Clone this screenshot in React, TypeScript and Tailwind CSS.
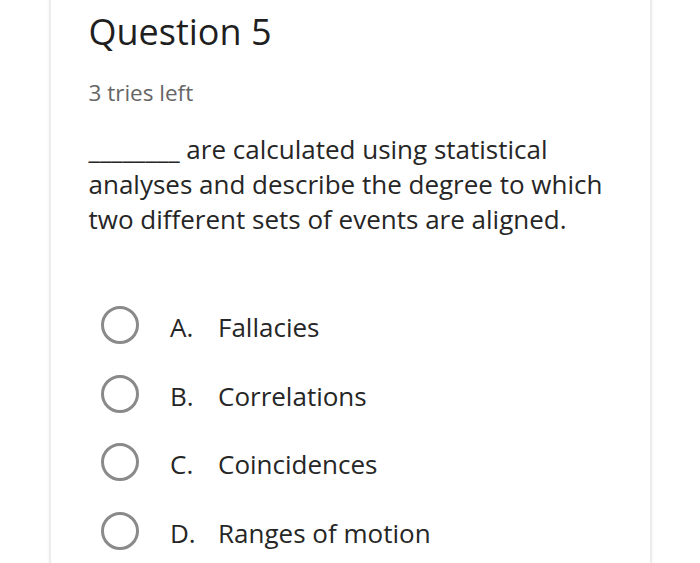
export default function App() {
  const options = [
    ["A.", "Fallacies"],
    ["B.", "Correlations"],
    ["C.", "Coincidences"],
    ["D.", "Ranges of motion"],
  ];
  return (
    <div
      className="w-[700px] h-[563px] bg-white overflow-hidden flex justify-center"
      style={{ fontFamily: '"Open Sans", sans-serif' }}
    >
      <div className="w-[603px] h-full border-x-2 border-[#ececec] shadow-[0_0_3px_rgba(0,0,0,0.06)] pl-[38px] pr-[30px] flex flex-col">
        <div className="mt-[8px] text-[36px] leading-[48px] text-[#1f1f1f]">Question 5</div>
        <div className="mt-[22px] text-[22.5px] leading-[30px] text-[#666666]">3 tries left</div>
        <p className="mt-[24px] text-[26px] leading-[35px] text-[#262626]">
          ________ are calculated using statistical analyses and describe the degree to which two different sets of events are aligned.
        </p>
        <div className="mt-[56px] flex flex-col">
          {options.map(([l, t]) => (
            <div key={l} className="h-[68.5px] flex items-center text-[26px] leading-[36px] text-[#262626]">
              <div className="ml-[12.5px] mb-[4px] w-[38px] h-[38px] rounded-full border-[3px] border-[#8a8a8a] shrink-0" />
              <span className="ml-[31px] w-[48px]">{l}</span>
              <span>{t}</span>
            </div>
          ))}
        </div>
      </div>
    </div>
  );
}
